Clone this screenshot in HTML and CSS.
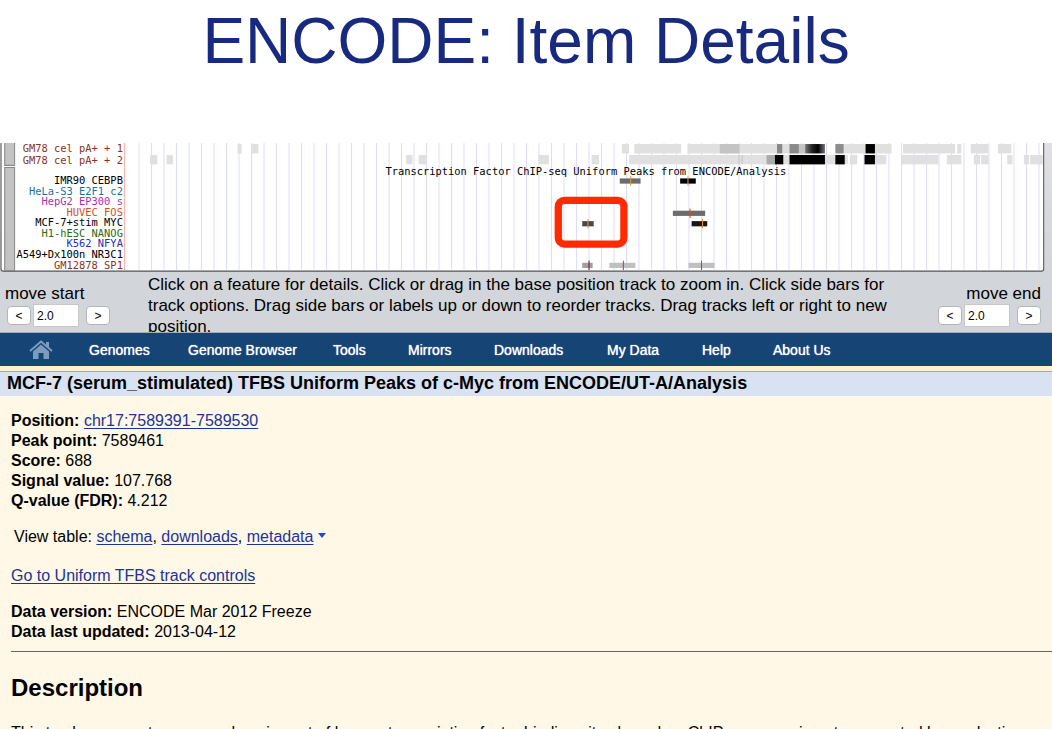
FILE: index.html
```html
<!DOCTYPE html>
<html lang="en">
<head>
    <meta charset="UTF-8">
    <meta name="viewport" content="width=device-width, initial-scale=1.0">
    <title>ENCODE: Item Details</title>
    <link rel="stylesheet" href="styles.css">
</head>
<body>
    <h1 class="slide-title">ENCODE: Item Details</h1>

    <section class="browser">
        <svg class="tracks" viewBox="0 0 1010 124" role="img" aria-label="Genome browser tracks">
            <defs>
                <pattern id="grid" x="133" y="0" width="12" height="124" patternUnits="userSpaceOnUse">
                    <rect width="1" height="124" fill="#dcdcfb"/>
                </pattern>
                <linearGradient id="exon">
                    <stop offset="0" stop-color="#777"/>
                    <stop offset=".35" stop-color="#222"/>
                    <stop offset=".65" stop-color="#000"/>
                    <stop offset="1" stop-color="#777"/>
                </linearGradient>
            </defs>
            <rect x="1" y="-10" width="1001" height="133" rx="2" fill="#fff" stroke="#555"/>
            <rect x="122" y="0" width="879" height="122" fill="url(#grid)"/>
            <rect x="119" y="0" width="1" height="122" fill="#ffb3a8"/>

            <!-- side bars -->
            <g fill="#c3c3c3" stroke="#888">
                <path d="M4.500 -1V21.500H14V-1"/>
                <path d="M4.500 23.500H14V122.500H4.500Z"/>
            </g>

            <!-- RNA-seq signal, replicate 1 -->
            <g fill="#e0e0e0">
                <rect x="228" y="1" width="4" height="9"/>
                <rect x="241" y="1" width="7" height="9"/>
                <rect x="597" y="1" width="7" height="9"/>
                <rect x="609" y="1" width="45" height="9"/>
                <rect x="660" y="1" width="132" height="9"/>
                <rect x="810" y="1" width="46" height="9"/>
                <rect x="867" y="1" width="50" height="9"/>
                <rect x="919" y="1" width="4" height="9"/>
                <rect x="932" y="1" width="17" height="9"/>
                <rect x="958" y="1" width="13" height="9"/>
            </g>
            <rect x="691" y="1" width="19" height="9" fill="#c4c4c4"/>
            <rect x="746" y="1" width="5" height="9" fill="#888"/>
            <rect x="758" y="1" width="9" height="9" fill="#8a8a8a"/>
            <rect x="767" y="1" width="6" height="9" fill="#c4c4c4"/>
            <rect x="773" y="1" width="19" height="9" fill="url(#exon)"/>
            <rect x="802" y="1" width="8" height="9" fill="#8c8c8c"/>
            <rect x="831" y="1" width="9" height="9" fill="#000"/>

            <!-- RNA-seq signal, replicate 2 -->
            <g fill="#e0e0e0">
                <rect x="144" y="11.500" width="7" height="9"/>
                <rect x="160" y="11.500" width="6" height="9"/>
                <rect x="390" y="11.500" width="6" height="9"/>
                <rect x="402" y="11.500" width="7" height="9"/>
                <rect x="517" y="11.500" width="10" height="9"/>
                <rect x="568" y="11.500" width="7" height="9"/>
                <rect x="604" y="11.500" width="210" height="9"/>
                <rect x="816" y="11.500" width="7" height="9"/>
                <rect x="840" y="11.500" width="11" height="9"/>
                <rect x="865" y="11.500" width="36" height="9"/>
                <rect x="909" y="11.500" width="14" height="9"/>
                <rect x="935" y="11.500" width="6" height="9"/>
                <rect x="942" y="11.500" width="7" height="9"/>
                <rect x="967" y="11.500" width="5" height="9"/>
                <rect x="983" y="11.500" width="5" height="9"/>
                <rect x="989" y="11.500" width="12" height="9"/>
            </g>
            <rect x="709" y="11.500" width="1" height="9" fill="#c4c4c4"/>
            <rect x="712" y="11.500" width="1" height="9" fill="#c4c4c4"/>
            <rect x="736" y="11.500" width="8" height="9" fill="#aaa"/>
            <rect x="744" y="11.500" width="8" height="9" fill="#000"/>
            <rect x="758" y="11.500" width="34" height="9" fill="#000"/>
            <rect x="802" y="11.500" width="9" height="9" fill="#000"/>
            <rect x="830" y="11.500" width="10" height="9" fill="#000"/>

            <!-- ChIP-seq peaks -->
            <rect x="595" y="34" width="20" height="5" fill="#6c6c6c"/>
            <rect x="653" y="34" width="15" height="5" fill="#000"/>
            <rect x="646" y="65" width="31" height="5" fill="#6c6c6c"/>
            <rect x="559" y="75" width="11" height="5" fill="#484848"/>
            <rect x="664" y="75" width="15" height="5" fill="#181818"/>
            <rect x="559" y="115" width="10" height="5" fill="#a0a0a0"/>
            <rect x="585" y="115" width="25" height="5" fill="#c0c0c0"/>
            <rect x="661" y="115" width="25" height="5" fill="#c0c0c0"/>
            <g fill="#e8912f">
                <rect x="605" y="32" width="1" height="9"/>
                <rect x="660" y="32" width="1" height="9"/>
                <rect x="564" y="73" width="1" height="9"/>
                <rect x="674" y="73" width="1" height="9"/>
            </g>
            <rect x="662" y="63" width="1" height="9" fill="#e0501c"/>
            <g fill="#a5503f">
                <rect x="565" y="113" width="1" height="9" fill="#6b1a10"/>
                <rect x="598" y="113" width="1" height="9"/>
                <rect x="673" y="113" width="1" height="9"/>
            </g>

            <g class="track-text" text-anchor="end">
                <text x="118" y="9" fill="#8a3324">GM78 cel pA+ + 1</text>
                <text x="118" y="20" fill="#8a3324">GM78 cel pA+ + 2</text>
                <text x="118" y="39">IMR90 CEBPB</text>
                <text x="118" y="50" fill="#1f6f9c">HeLa-S3 E2F1 c2</text>
                <text x="118" y="60" fill="#b02fa8">HepG2 EP300 s</text>
                <text x="118" y="70" fill="#d2521f">HUVEC FOS</text>
                <text x="118" y="80">MCF-7+stim MYC</text>
                <text x="118" y="90" fill="#2a6b1c">H1-hESC NANOG</text>
                <text x="118" y="100" fill="#2a2fb5">K562 NFYA</text>
                <text x="118" y="110">A549+Dx100n NR3C1</text>
                <text x="118" y="121" fill="#8a3324">GM12878 SP1</text>
            </g>
            <text class="track-text" x="370" y="31">Transcription Factor ChIP-seq Uniform Peaks from ENCODE/Analysis</text>

            <rect x="536" y="55" width="63" height="42" rx="6" fill="none" stroke="#ff2a00" stroke-width="7"/>
        </svg>

        <div class="controls">
            <div class="move">
                <label for="start">move start</label>
                <div class="move-row">
                    <button type="button">&lt;</button>
                    <input id="start" type="text" value="2.0">
                    <button type="button">&gt;</button>
                </div>
            </div>
            <p class="help">Click on a feature for details. Click or drag in the base position track to zoom in. Click side bars for track options. Drag side bars or labels up or down to reorder tracks. Drag tracks left or right to new position.</p>
            <div class="move move-end">
                <label for="end">move end</label>
                <div class="move-row">
                    <button type="button">&lt;</button>
                    <input id="end" type="text" value="2.0">
                    <button type="button">&gt;</button>
                </div>
            </div>
        </div>
    </section>

    <nav class="menu">
        <a href="#" aria-label="Home">
            <svg class="home" viewBox="0 0 24 20">
                <path d="M1 11 12 1.500 23 11" fill="none" stroke="#7c9cbe" stroke-width="2"/>
                <path d="M17 2h3v6l-3-2.500z" fill="#7c9cbe"/>
                <path d="M4 11.500 12 4.500 20 11.500V19H14.500V13H9.500V19H4Z" fill="#7c9cbe"/>
            </svg>
        </a>
        <a href="#">Genomes</a>
        <a href="#">Genome Browser</a>
        <a href="#">Tools</a>
        <a href="#">Mirrors</a>
        <a href="#">Downloads</a>
        <a href="#">My Data</a>
        <a href="#">Help</a>
        <a href="#">About Us</a>
    </nav>

    <h2 class="item-title">MCF-7 (serum_stimulated) TFBS Uniform Peaks of c-Myc from ENCODE/UT-A/Analysis</h2>

    <main class="details">
        <p>
            <b>Position:</b> <a href="#">chr17:7589391-7589530</a><br>
            <b>Peak point:</b> 7589461<br>
            <b>Score:</b> 688<br>
            <b>Signal value:</b> 107.768<br>
            <b>Q-value (FDR):</b> 4.212
        </p>
        <p class="view-table">View table: <a href="#">schema</a>, <a href="#">downloads</a>, <a href="#">metadata</a><span class="arrow"></span></p>
        <p><a href="#">Go to Uniform TFBS track controls</a></p>
        <p class="version">
            <b>Data version:</b> ENCODE Mar 2012 Freeze<br>
            <b>Data last updated:</b> 2013-04-12
        </p>
        <hr>
        <h3>Description</h3>
        <p class="description">This track represents a comprehensive set of human transcription factor binding sites based on ChIP-seq experiments generated by production</p>
    </main>
</body>
</html>
```

FILE: styles.css
```css
* {
    box-sizing: border-box;
}

body {
    margin: 0;
    height: 100vh;
    overflow: hidden;
    background-color: #fff;
    color: #000;
    font-family: "Liberation Sans", Arial, sans-serif;
    font-size: 16px;
}

.slide-title {
    margin: 0;
    padding: 5px 0 66px;
    color: #182a80;
    font-size: 64px;
    font-weight: normal;
    line-height: 72px;
    text-align: center;
}

/* track image and its controls */
.browser {
    background: linear-gradient(#e0e0e5, #d2d5d9 60%);
    border-bottom: 1px solid #a9abae;
}

.tracks {
    display: block;
    width: 100%;
}

.track-text {
    font-family: "DejaVu Sans Mono", monospace;
    font-size: 10px;
}

.controls {
    display: flex;
    height: 60px;
    padding: 0 11px 0 5px;
    overflow: hidden;
}

.move {
    width: 143px;
    padding-top: 12px;
    font-size: 17px;
    line-height: 20px;
}

.move-row {
    display: flex;
    align-items: center;
    padding-left: 2px;
}

.move-end {
    display: flex;
    flex-direction: column;
    align-items: flex-end;
    margin-left: auto;
}

.move button {
    width: 24px;
    height: 19px;
    padding: 0;
    border: 1px solid #b5b5b8;
    border-radius: 4px;
    background-color: #fff;
    font-family: inherit;
    font-size: 12px;
    line-height: 16px;
}

.move input {
    width: 46px;
    height: 23px;
    margin: 0 7px 0 2px;
    padding: 0 3px;
    border: 1px solid #c8c8c8;
    background-color: #fff;
    font-family: inherit;
    font-size: 12px;
}

.help {
    width: 748px;
    margin: 0;
    padding-top: 2px;
    font-size: 17px;
    line-height: 21px;
}

/* blue menu bar */
.menu {
    display: grid;
    grid-template-columns: 60px 99px 145px 75px 86px 113px 95px 71px 1fr;
    align-items: center;
    height: 33px;
    padding-left: 29px;
    background-color: #164475;
}

.menu a {
    color: #fff;
    font-size: 14px;
    text-decoration: none;
    text-shadow: 0 0 1px #fff;
}

.home {
    display: block;
    width: 24px;
    height: 20px;
}

.item-title {
    margin: 0;
    padding: 0 7px;
    border-top: 5px solid #fdf0cf;
    background-color: #d9e2f3;
    box-shadow: inset 0 1px #a8a8a8;
    font-size: 18px;
    line-height: 25px;
}

.details {
    padding: 15px 0 0 11px;
    background-color: #fff8e7;
    line-height: 20px;
}

.details p {
    margin: 0 0 16px;
}

.details a {
    color: #1c3494;
    text-underline-offset: 2px;
}

.details .view-table {
    padding-left: 3px;
    margin-bottom: 19px;
}

.details .version {
    margin-bottom: 9px;
}

.arrow {
    display: inline-block;
    margin-left: 5px;
    border: 4px solid transparent;
    border-top: 5px solid #1c4fc4;
    border-bottom: 0;
    vertical-align: 4px;
}

.details hr {
    margin: 0;
    border: 0;
    border-top: 1px solid #666;
}

.details h3 {
    margin: 0;
    padding: 20px 0 19px;
    font-size: 24px;
    line-height: 32px;
}

.details .description {
    margin: 0;
}
```
